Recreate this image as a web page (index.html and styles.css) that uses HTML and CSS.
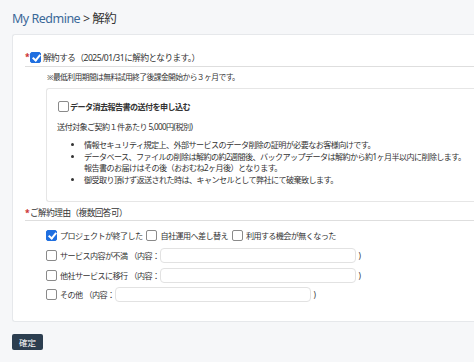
FILE: index.html
```html
<!DOCTYPE html>
<html lang="ja">
<head>
    <meta charset="UTF-8">
    <title>解約 - My Redmine</title>
    <link rel="stylesheet" href="styles.css">
</head>
<body>
    <h1 class="title"><a href="#">My Redmine</a> &gt; 解約</h1>

    <form class="box">
        <div class="section-head">
            <span class="required">*</span>
            <input type="checkbox" class="check" checked>
            <span>解約する（2025/01/31に解約となります。）</span>
        </div>
        <p class="note">※最低利用期間は無料試用終了後課金開始から３ヶ月です。</p>

        <div class="option-box">
            <label class="option-title">
                <input type="checkbox" class="check">データ消去報告書の送付を申し込む
            </label>
            <p class="price">送付対象ご契約１件あたり&nbsp;5,000円(税別)</p>
            <ul class="bullets">
                <li>情報セキュリティ規定上、外部サービスのデータ削除の証明が必要なお客様向けです。</li>
                <li>データベース、ファイルの削除は解約の約2週間後、バックアップデータは解約から約1ヶ月半以内に削除します。<br>報告書のお届けはその後（おおむね2ヶ月後）となります。</li>
                <li>御受取り頂けず返送された時は、キャンセルとして弊社にて破棄致します。</li>
            </ul>
        </div>

        <div class="section-head second">
            <span class="required">*</span>
            <span>ご解約理由（複数回答可）</span>
        </div>

        <div class="reasons">
            <div class="reason-row">
                <label><input type="checkbox" class="check" checked>プロジェクトが終了した</label>
                <label><input type="checkbox" class="check">自社運用へ差し替え</label>
                <label><input type="checkbox" class="check">利用する機会が無くなった</label>
            </div>
            <div class="reason-row">
                <label><input type="checkbox" class="check">サービス内容が不満</label>
                <span class="detail">（内容：</span><input type="text" class="text-field"><span class="paren">)</span>
            </div>
            <div class="reason-row">
                <label><input type="checkbox" class="check">他社サービスに移行</label>
                <span class="detail">（内容：</span><input type="text" class="text-field"><span class="paren">)</span>
            </div>
            <div class="reason-row">
                <label><input type="checkbox" class="check">その他</label>
                <span class="detail">（内容：</span><input type="text" class="text-field"><span class="paren">)</span>
            </div>
        </div>
    </form>

    <button type="button" class="submit">確定</button>
</body>
</html>
```

FILE: styles.css
```css
body {
    margin: 0;
    padding: 0;
    width: 490px;
    background-color: #f6f7f9;
    font-family: "Noto Sans", "Noto Sans CJK JP", sans-serif;
    color: #333;
    font-size: 8.1px;
    letter-spacing: -0.6px;
    white-space: nowrap;
}

.title {
    box-sizing: border-box;
    margin: 0;
    padding: 9px 12px 0;
    height: 34px;
    font-size: 12.5px;
    line-height: 20px;
    font-weight: normal;
    letter-spacing: -0.5px;
    color: #333;
}

.title a {
    color: #3a6898;
    text-decoration: none;
}

.box {
    margin: 0 0 0 12px;
    padding: 15px 0 16px 12px;
    background-color: #fff;
    border: 1px solid #e6e8eb;
    border-right: none;
    border-radius: 3px 0 0 3px;
}

.section-head {
    display: flex;
    align-items: center;
    height: 14px;
    padding-bottom: 2px;
    border-bottom: 1px solid #dedede;
    font-size: 8.6px;
    letter-spacing: -0.5px;
}

.section-head.second {
    margin-top: 4px;
    padding-bottom: 0;
}

.required {
    color: #c33;
    font-weight: bold;
    width: 5px;
}

.section-head .check {
    margin-right: 2px;
}

.note {
    margin: 4px 0 0 22px;
    font-size: 7.8px;
    letter-spacing: -0.6px;
    line-height: 12px;
}

.option-box {
    margin: 5px 0 0 21px;
    padding: 10px 0 15px 11px;
    border: 1px solid #e6e6e6;
    border-right: none;
    border-radius: 3px 0 0 3px;
}

.option-title {
    display: flex;
    align-items: center;
    height: 14px;
    font-weight: bold;
}

.option-title .check {
    margin-right: 1px;
}

.price {
    margin: 8px 0 0 -1px;
    line-height: 12px;
}

.bullets {
    margin: 6px 0 0;
    padding-left: 26px;
    line-height: 11.7px;
}

.check {
    -webkit-appearance: none;
    appearance: none;
    position: relative;
    box-sizing: border-box;
    width: 11px;
    height: 11px;
    margin: 0 3px 0 0;
    border: 1px solid #8a8a8a;
    border-radius: 2px;
    background-color: #fff;
    flex-shrink: 0;
}

.check:checked {
    background-color: #1f6fe0;
    border-color: #1f6fe0;
}

.check:checked::after {
    content: "";
    position: absolute;
    left: 3px;
    top: 0;
    width: 3px;
    height: 6px;
    border: solid #fff;
    border-width: 0 2px 2px 0;
    transform: rotate(40deg);
}

.reasons {
    padding: 5px 0 0 21px;
}

.reason-row {
    display: flex;
    align-items: center;
    height: 19.7px;
}

.reason-row label {
    display: flex;
    align-items: center;
    margin-right: 4px;
}

.detail {
    margin-left: -2px;
}

.text-field {
    box-sizing: border-box;
    width: 196px;
    height: 15px;
    margin: 0 0 0 1px;
    border: 1px solid #e2e2e2;
    border-radius: 4px;
}

.paren {
    margin-left: 2px;
}

.submit {
    display: block;
    margin: 12px 0 0 12px;
    padding: 0 7px;
    height: 16px;
    background-color: #2c3e50;
    color: #fff;
    border: none;
    border-radius: 2px;
    font-family: "Noto Sans", "Noto Sans CJK JP", sans-serif;
    font-size: 8.5px;
    letter-spacing: 0;
}
```
